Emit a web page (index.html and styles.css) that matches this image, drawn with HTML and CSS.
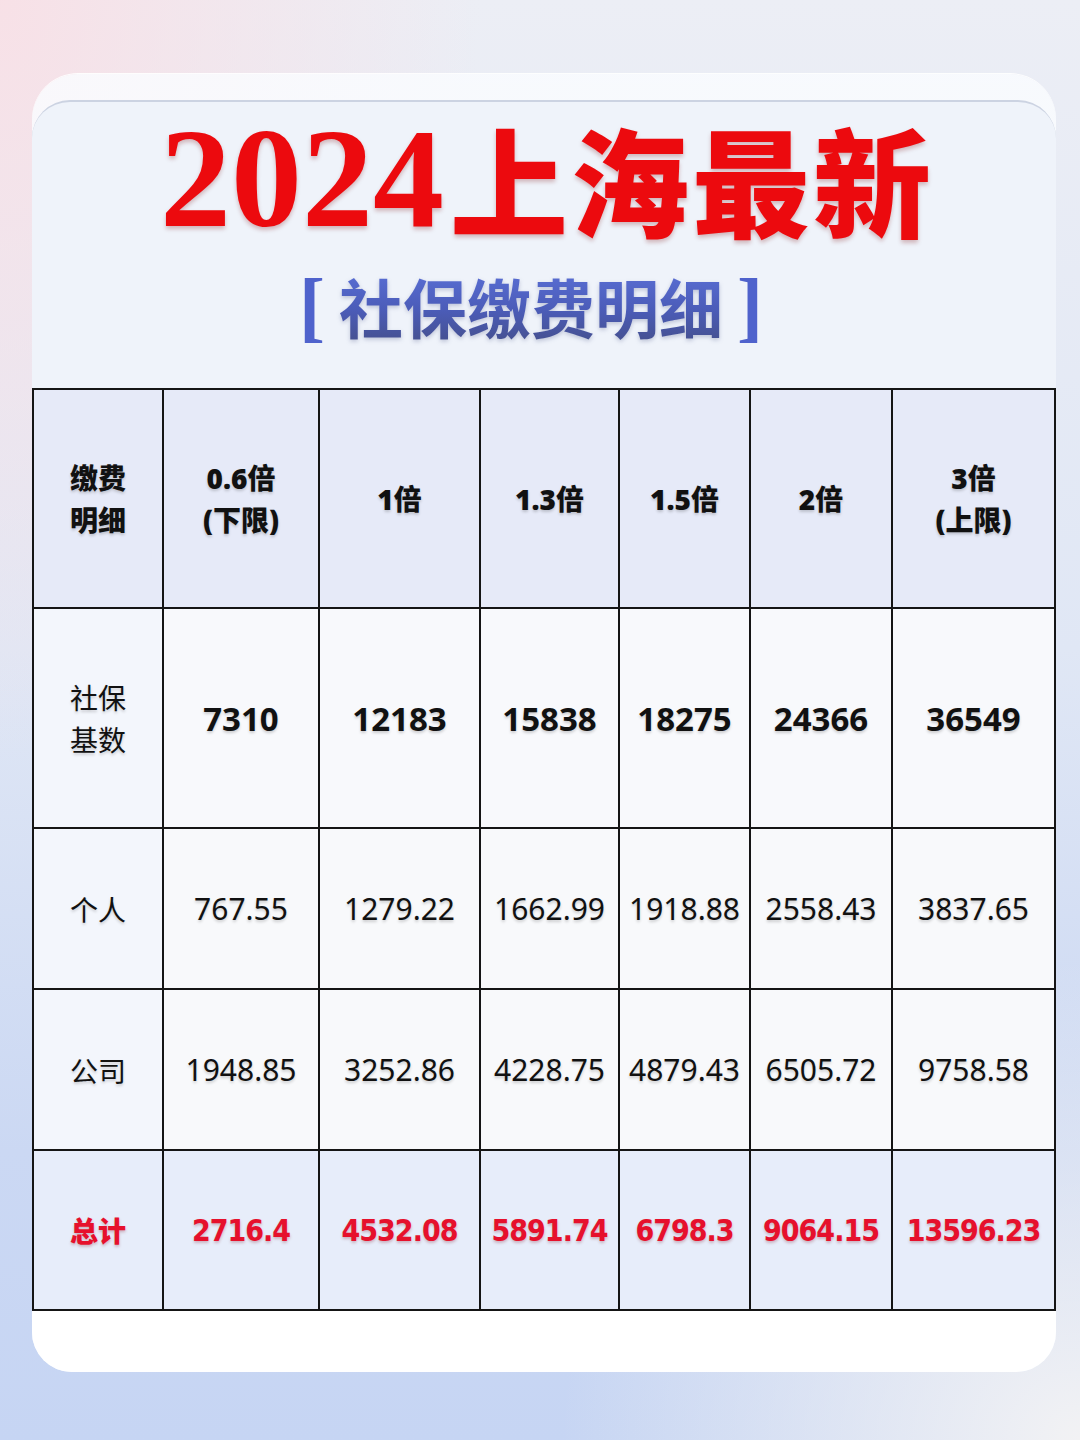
FILE: index.html
```html
<!DOCTYPE html>
<html lang="zh-CN">
<head>
<meta charset="utf-8">
<title>2024上海最新 社保缴费明细</title>
<link rel="stylesheet" href="styles.css">
</head>
<body>
<div class="card">
  <div class="panel">
    <h1 class="title"><span class="num">2024</span><span class="cjk">上海最新</span></h1>
    <div class="subtitle"><span class="br">[</span><span class="sub-text">社保缴费明细</span><span class="br">]</span></div>
    <table class="grid">
      <colgroup>
        <col class="c1"><col class="c2"><col class="c3"><col class="c4"><col class="c5"><col class="c6"><col class="c7">
      </colgroup>
      <tr class="head">
        <th>缴费<br>明细</th>
        <th>0.6倍<br>(下限)</th>
        <th>1倍</th>
        <th>1.3倍</th>
        <th>1.5倍</th>
        <th>2倍</th>
        <th>3倍<br>(上限)</th>
      </tr>
      <tr class="base">
        <td class="label">社保<br>基数</td>
        <td>7310</td><td>12183</td><td>15838</td><td>18275</td><td>24366</td><td>36549</td>
      </tr>
      <tr class="row">
        <td class="label">个人</td>
        <td>767.55</td><td>1279.22</td><td>1662.99</td><td>1918.88</td><td>2558.43</td><td>3837.65</td>
      </tr>
      <tr class="row">
        <td class="label">公司</td>
        <td>1948.85</td><td>3252.86</td><td>4228.75</td><td>4879.43</td><td>6505.72</td><td>9758.58</td>
      </tr>
      <tr class="total">
        <td class="label">总计</td>
        <td>2716.4</td><td>4532.08</td><td>5891.74</td><td>6798.3</td><td>9064.15</td><td>13596.23</td>
      </tr>
    </table>
    <div class="foot"></div>
  </div>
</div>
</body>
</html>
```

FILE: styles.css
```css
html, body {
  margin: 0;
  padding: 0;
}
body {
  width: 1080px;
  height: 1440px;
  overflow: hidden;
  font-family: "Noto Sans", "Noto Sans CJK SC", sans-serif;
  background:
    radial-gradient(ellipse 480px 760px at 0px 0px, rgba(248, 224, 230, 0.95), rgba(248, 226, 232, 0) 100%),
    radial-gradient(ellipse 520px 480px at 1080px 1440px, rgba(242, 242, 244, 1), rgba(242, 242, 244, 0) 100%),
    linear-gradient(180deg, #eceef5 0%, #e0e7f5 45%, #cbd8f3 80%, #c6d5f3 100%);
}
.card {
  margin: 74px 0 0 32px;
  width: 1024px;
  height: 1298px;
  padding-top: 26px;
  box-sizing: border-box;
  border-radius: 46px 46px 40px 40px;
  background: linear-gradient(180deg, rgba(250, 252, 255, 0.85), rgba(245, 248, 253, 0.7));
  box-shadow: 0 -1px 0 rgba(255, 255, 255, 0.9);
}
.panel {
  height: 1272px;
  border-radius: 38px 38px 40px 40px;
  background: #eff3fa;
  border-top: 2px solid #ccd3e2;
  box-sizing: border-box;
  display: flex;
  flex-direction: column;
}
.title {
  margin: 0;
  height: 152px;
  display: flex;
  align-items: center;
  justify-content: center;
  color: #ec0a0e;
  text-shadow: 0 3px 4px rgba(120, 0, 0, 0.25);
  font-weight: 700;
  line-height: 1.2;
  padding-left: 6px;
}
.title .num {
  font-family: "Liberation Serif", serif;
  font-size: 142px;
  font-weight: 700;
}
.title .cjk {
  font-family: "Noto Sans CJK SC", sans-serif;
  font-size: 118px;
  font-weight: 900;
  letter-spacing: 3px;
  margin-left: 6px;
}
.subtitle {
  height: 104px;
  display: flex;
  align-items: center;
  justify-content: center;
  gap: 14px;
  padding-right: 26px;
}
.subtitle .br {
  font-family: "Liberation Serif", serif;
  font-size: 78px;
  font-weight: 700;
  color: #4f62cc;
  line-height: 1;
}
.subtitle .sub-text {
  font-family: "Noto Sans CJK SC", sans-serif;
  font-size: 64px;
  font-weight: 700;
  line-height: 1.15;
  background: linear-gradient(180deg, #5a6fd6 0%, #4b5cb8 55%, #45508f 100%);
  -webkit-background-clip: text;
  background-clip: text;
  color: transparent;
  filter: drop-shadow(0 2px 2px rgba(40, 50, 110, 0.25));
}
.grid {
  margin-top: 30px;
  width: 1022px;
  border-collapse: collapse;
  table-layout: fixed;
  border: 2px solid #151515;
}
.c1 { width: 130px; }
.c2 { width: 156px; }
.c3 { width: 161px; }
.c4 { width: 139px; }
.c5 { width: 131px; }
.c6 { width: 142px; }
.c7 { width: 163px; }
.grid th, .grid td {
  border: 2px solid #151515;
  padding: 0;
  text-align: center;
  vertical-align: middle;
  color: #111;
  text-shadow: 0 2px 3px rgba(0, 0, 0, 0.18);
}
.head th {
  height: 217px;
  background: #e6eaf8;
  font-family: "Noto Sans", "Noto Sans CJK SC", sans-serif;
  font-weight: 900;
  font-size: 28px;
  line-height: 42px;
}
.base td {
  height: 218px;
  background: #f8f9fc;
  font-family: "Noto Sans", sans-serif;
  font-weight: 700;
  font-size: 33px;
}
.base td.label, .row td.label {
  font-family: "Noto Sans CJK SC", sans-serif;
  font-weight: 400;
  font-size: 28px;
  line-height: 42px;
  background: #f3f6fc;
}
.row td {
  height: 159px;
  background: #f8f9fb;
  font-family: "Noto Sans", sans-serif;
  font-weight: 400;
  font-size: 30px;
}
.total td {
  height: 158px;
  background: #e7edfa;
  color: #e6102c;
  font-family: "DejaVu Sans", sans-serif;
  font-stretch: condensed;
  font-weight: 700;
  font-size: 30px;
  letter-spacing: -1px;
  text-shadow: 0 2px 3px rgba(120, 0, 20, 0.25);
}
.total td.label {
  font-family: "Noto Sans CJK SC", sans-serif;
  font-weight: 900;
  font-size: 28px;
  letter-spacing: 0;
}
.foot {
  flex: 1;
  background: #ffffff;
  border-radius: 0 0 40px 40px;
}
```
